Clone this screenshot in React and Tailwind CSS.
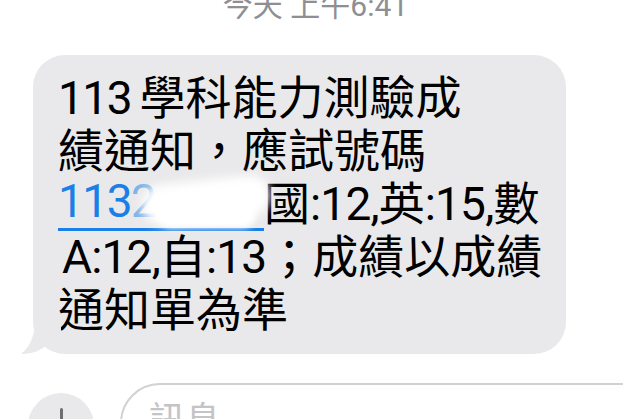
import React from 'react';

// latin runs are set a little tighter, like the phone's system font
const Latin = ({ children, tight }) => (
    <span className={tight ? 'tracking-[-1.5px]' : 'tracking-[-0.8px]'}>{children}</span>
);

const App = () => {
    return (
        <div
            className='w-[623px] h-[419px] overflow-hidden bg-white flex flex-col'
            style={{ fontFamily: 'Roboto, "Noto Sans CJK TC", sans-serif' }}
        >
            {/* timestamp, cut off at the top */}
            <div className='h-[20px] shrink-0 flex justify-center pl-[8px]'>
                <span className='-mt-[14px] text-[30px] leading-[40px] text-[#8e8e93] whitespace-nowrap'>今天 上午6:41</span>
            </div>

            {/* message bubble */}
            <div className='relative shrink-0 mt-[35px] ml-[33px] w-[533px] h-[299px] rounded-[32px] bg-[#e9e9eb] pl-[25px] pt-[17px]'>
                <div className='text-[46px] leading-[53px] text-black whitespace-nowrap'>
                    <div><Latin tight>113</Latin><span className='tracking-[-3px]'> </span>學科能力測驗成</div>
                    <div>績通知，應試號碼</div>
                    <div className='flex'>
                        <span className='relative text-[#1a7fe6] border-b-[3px] border-[#1a7fe6] leading-[47px] h-[53px] w-[206px] shrink-0'>
                            <Latin tight>113</Latin><span className='opacity-50'>2</span>
                            <span className='absolute left-[84px] top-[2px] w-[128px] h-[40px] rounded-full bg-white blur-[5px] -rotate-6' />
                            <span className='absolute left-[100px] top-[24px] w-[98px] h-[26px] rounded-full bg-white blur-[3px]' />
                        </span>
                        <span>國<Latin>:12,</Latin>英<Latin>:15,</Latin>數</span>
                    </div>
                    <div className='pl-[4px]'><Latin>A:12,</Latin>自<Latin>:13</Latin>；成績以成績</div>
                    <div>通知單為準</div>
                </div>
                {/* tail */}
                <svg className='absolute -left-[12px] bottom-0' width='40' height='34' viewBox='0 0 40 34'>
                    <path d='M14 0 C14 14 10 26 0 34 C12 34 20 30 26 25 C30 29 34 32 40 34 L40 0 Z' fill='#e9e9eb' />
                </svg>
            </div>

            {/* input bar */}
            <div className='mt-[29px] shrink-0 flex items-start'>
                <div className='ml-[28px] mt-[10px] w-[66px] h-[66px] shrink-0 rounded-full bg-[#e9e9eb] flex justify-center'>
                    <span className='mt-[15px] w-[3px] h-[30px] bg-[#6d6d72] rounded-full' />
                </div>
                <div className='ml-[26px] h-[80px] flex-1 -mr-[40px] rounded-[40px] border-2 border-[#d1d1d6] pl-[27px] pt-[14px]'>
                    <span className='text-[36px] leading-[44px] text-[#c4c4c6]'>訊息</span>
                </div>
            </div>
        </div>
    );
};

export default App;
